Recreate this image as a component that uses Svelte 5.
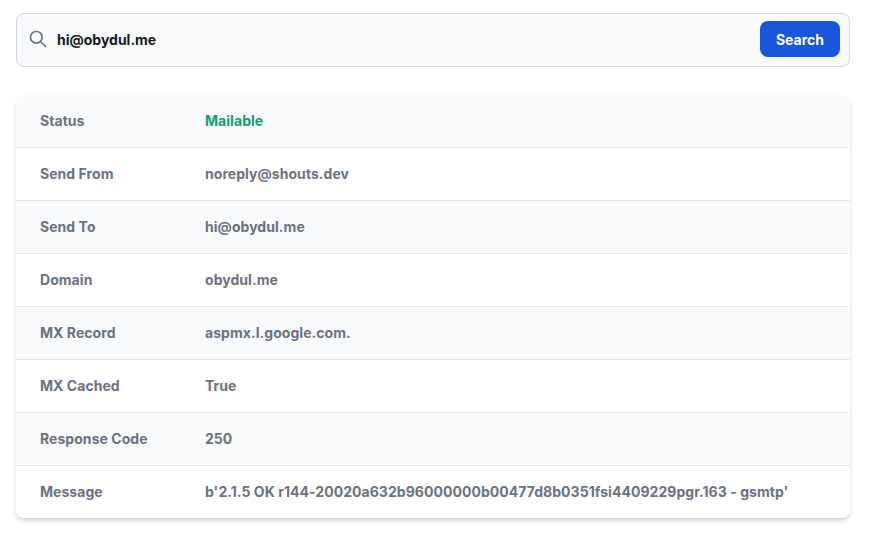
<script>
  const rows = [
    { label: 'Status', value: 'Mailable', ok: true },
    { label: 'Send From', value: 'noreply@shouts.dev' },
    { label: 'Send To', value: 'hi@obydul.me' },
    { label: 'Domain', value: 'obydul.me' },
    { label: 'MX Record', value: 'aspmx.l.google.com.' },
    { label: 'MX Cached', value: 'True' },
    { label: 'Response Code', value: '250' },
    { label: 'Message', value: "b'2.1.5 OK r144-20020a632b96000000b00477d8b0351fsi4409229pgr.163 - gsmtp'" }
  ];
</script>

<main class="page">
  <form class="search" on:submit|preventDefault>
    <svg class="search-icon" width="20" height="20" viewBox="0 0 24 24" fill="none" stroke="currentColor" stroke-width="2" stroke-linecap="round" stroke-linejoin="round" aria-hidden="true">
      <path d="M21 21l-6-6m2-5a7 7 0 11-14 0 7 7 0 0114 0z" />
    </svg>
    <input class="search-input" type="text" value="hi@obydul.me" />
    <button class="search-btn" type="submit">Search</button>
  </form>

  <div class="card">
    {#each rows as row, i}
      <div class="row" class:odd={i % 2 === 0}>
        <div class="label">{row.label}</div>
        <div class="value" class:ok={row.ok}>{row.value}</div>
      </div>
    {/each}
  </div>
</main>

<style>
  :global(body) {
    background: #fff;
    font-family: Inter, "Liberation Sans", sans-serif;
  }

  .page {
    display: flex;
    flex-direction: column;
    gap: 28px;
    width: 834px;
    padding: 13px 0 16px 16px;
  }

  .search {
    display: flex;
    align-items: center;
    box-sizing: border-box;
    height: 54px;
    padding: 0 9px 2px 11px;
    background: #f9fafb;
    border: 1px solid #d1d5db;
    border-radius: 8px;
  }
  .search-icon { color: #6b7280; flex: none; }
  .search-input {
    flex: 1;
    min-width: 0;
    margin-left: 9px;
    padding: 0;
    border: 0;
    outline: 0;
    background: transparent;
    font: 650 14px Inter, "Liberation Sans", sans-serif;
    color: #111827;
  }
  .search-btn {
    width: 80px;
    height: 36px;
    border: 0;
    border-radius: 8px;
    background: #1a56db;
    color: #fff;
    font: 700 14px Inter, "Liberation Sans", sans-serif;
    cursor: pointer;
  }

  .card {
    border-radius: 8px;
    box-shadow: 0 4px 6px -1px rgba(0, 0, 0, 0.14), 0 2px 4px -1px rgba(0, 0, 0, 0.08);
    background: #fff;
  }
  .row {
    display: flex;
    align-items: center;
    height: 50px;
    padding: 0 24px 2px;
    border-bottom: 1px solid #e5e7eb;
    font-size: 14px;
    font-weight: 650;
    letter-spacing: 0.05px;
    color: #6b7280;
  }
  .row:first-child { border-radius: 8px 8px 0 0; }
  .row:last-child { border-bottom: 0; border-radius: 0 0 8px 8px; }
  .row.odd { background: #f9fafb; }
  .label { width: 165px; flex: none; }
  .value.ok { color: #0e9f6e; }
</style>
